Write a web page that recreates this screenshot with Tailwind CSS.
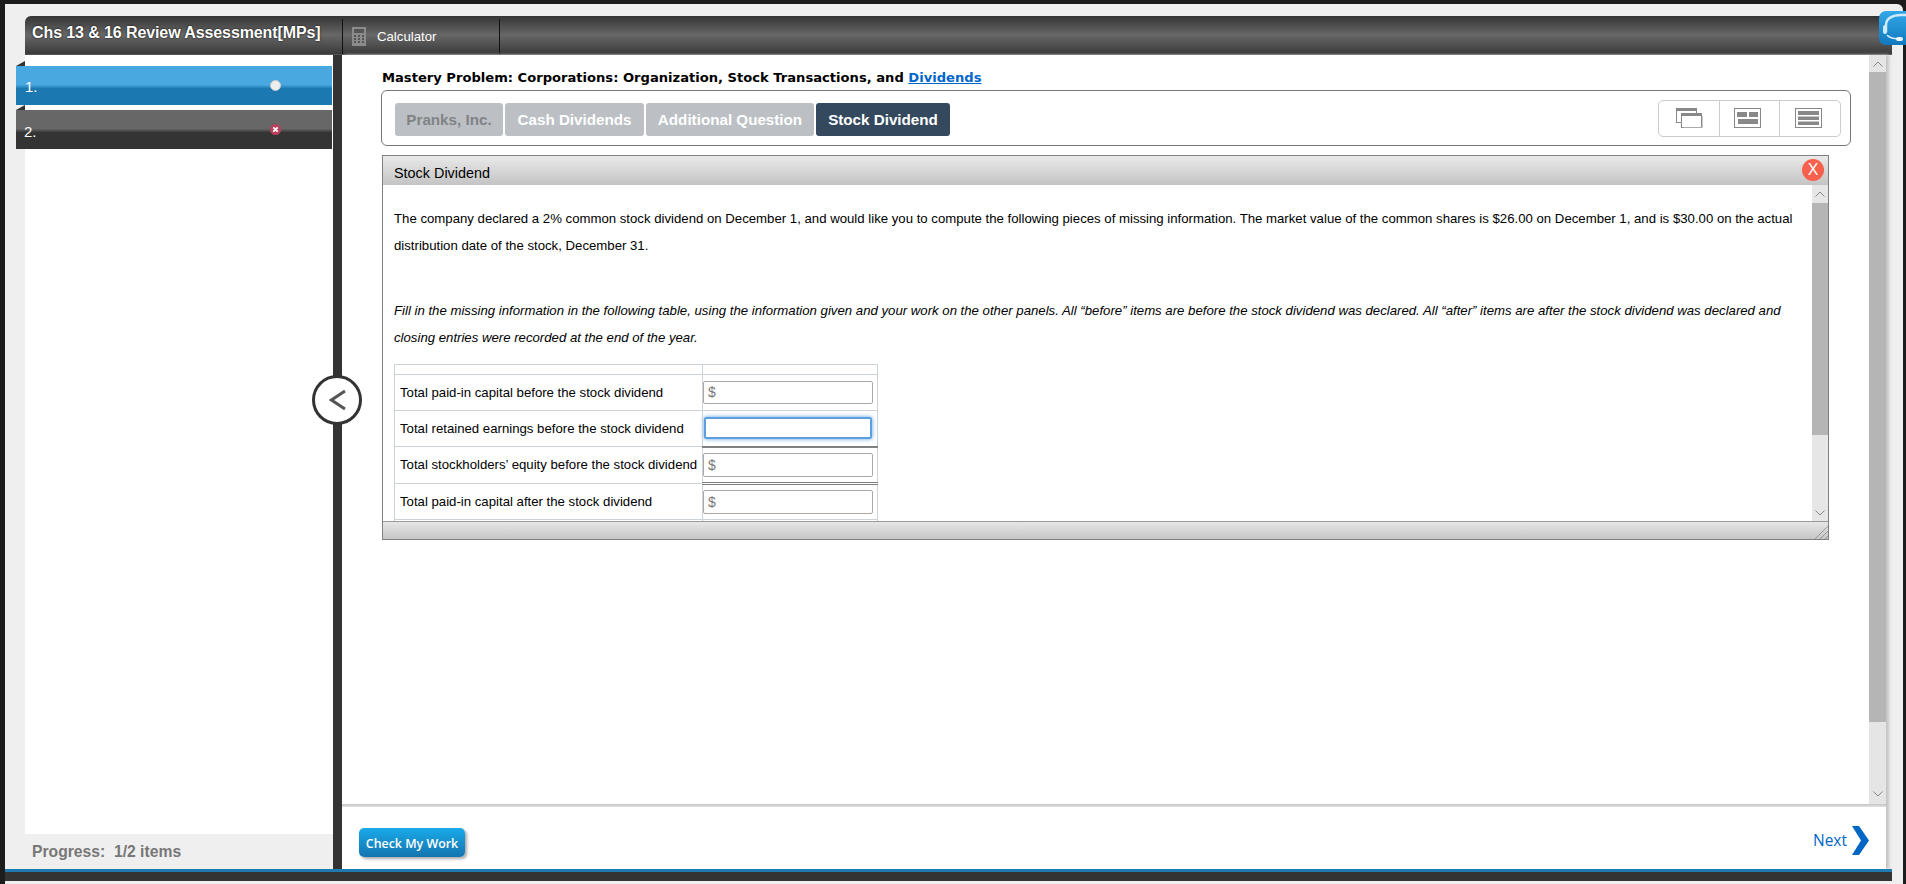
<!DOCTYPE html>
<html lang="en"><head><meta charset="utf-8"><title>Stock Dividend</title>
<script src="https://cdn.jsdelivr.net/npm/@tailwindcss/browser@4"></script></head>
<body class="bg-[#1c1c1c] font-['Liberation_Sans',Arial,sans-serif] overflow-hidden">
<div class="relative w-[1906px] h-[884px] pt-[4px] pl-[5px] pr-[3px] flex flex-col">
 <div class="flex-1 bg-[#efefef] rounded-tr-[6px] flex flex-col pt-[12px] min-h-0">
  <!-- top bar -->
  <div class="ml-[20px] mr-[11px] h-[39px] shrink-0 flex rounded-tl-[6px] bg-[linear-gradient(#343434,#676767_50%,#3a3a3a)] border-b border-[#555]">
   <div class="w-[317px] pl-[7px] pt-[7px] text-[16px] leading-[20px] font-bold text-white tracking-[-0.1px] [text-shadow:0_0_2px_#000]">Chs 13 &amp; 16 Review Assessment[MPs]</div>
   <div class="w-[158px] mt-[3px] border-x border-[#111] flex items-center pl-[9px] gap-[11px] text-[13.200px] text-white">
    <svg width="14" height="19" viewBox="0 0 14 19"><rect width="14" height="19" fill="#8b8b8b"/><rect x="2" y="2" width="10" height="4" fill="#555"/><g fill="#555"><rect x="2" y="8" width="2" height="2"/><rect x="6" y="8" width="2" height="2"/><rect x="10" y="8" width="2" height="2"/><rect x="2" y="11" width="2" height="2"/><rect x="6" y="11" width="2" height="2"/><rect x="10" y="11" width="2" height="2"/><rect x="2" y="14" width="2" height="2"/><rect x="6" y="14" width="2" height="2"/><rect x="10" y="14" width="2" height="2"/></g></svg>
    <span class="pt-[1px]">Calculator</span>
   </div>
  </div>
  <div class="flex-1 flex min-h-0">
   <!-- sidebar -->
   <div class="w-[328px] shrink-0 flex flex-col pl-[20px]">
    <div class="flex-1 bg-white pt-[11px] flex flex-col gap-[5px]">
     <div class="relative -ml-[9px] mr-[1px] h-[39px] shrink-0 bg-[linear-gradient(#4aa8e0_0,#4aa8e0_48%,#1b78b0_58%,#1b78b0)] text-white text-[15px] leading-[42px] pl-[9px]">
      <span class="absolute left-0 -top-[5px] border-b-[5px] border-l-[9px] border-b-[#333] border-l-transparent"></span>1.
      <span class="absolute left-[254px] top-[14px] w-[11px] h-[11px] rounded-full bg-[#eee] border border-[#ccc]"></span>
     </div>
     <div class="relative -ml-[9px] mr-[1px] h-[39px] shrink-0 bg-[linear-gradient(#676767_0,#676767_48%,#343434_58%,#343434)] text-white text-[15px] leading-[44px] pl-[8px]">
      <span class="absolute left-0 -top-[5px] border-b-[5px] border-l-[9px] border-b-[#333] border-l-transparent"></span>2.
      <svg class="absolute left-[254px] top-[14px]" width="11" height="11" viewBox="0 0 11 11"><circle cx="5.5" cy="5.5" r="5.5" fill="#b8405e"/><path d="M3.3 3.3l4.4 4.4M7.7 3.3l-4.4 4.4" stroke="#fff" stroke-width="1.8"/></svg>
     </div>
    </div>
    <div class="h-[35px] shrink-0 pl-[7px] text-[15.700px] leading-[35px] font-bold text-[#777]">Progress:&nbsp; 1/2 items</div>
   </div>
   <div class="w-[9px] shrink-0 bg-[#333]"></div>
   <!-- content -->
   <div class="flex-1 min-w-0 flex flex-col bg-white mr-[17px] shadow-[3px_0_3px_#c4c4c4]">
    <div class="flex-1 min-h-0 flex">
     <div class="flex-1 min-w-0 pl-[40px] pt-[14px]">
      <h1 class="text-[13.100px] leading-[17px] font-bold text-black font-['DejaVu_Sans',sans-serif] whitespace-nowrap">Mastery Problem: Corporations: Organization, Stock Transactions, and <a class="text-[#0066cc] underline">Dividends</a></h1>
      <div class="mt-[4px] w-[1470px] -ml-[1px] h-[56px] border border-[#777] rounded-[6px] flex items-center justify-between pl-[13px] pr-[9px]">
       <div class="mt-[3px] flex text-[15.200px] font-bold gap-[2px] text-white">
        <div class="w-[108px] h-[33px] leading-[33px] text-center rounded-[3px] bg-[#bcc0c4] text-[#808386]">Pranks, Inc.</div>
        <div class="w-[139px] h-[33px] leading-[33px] text-center rounded-[3px] bg-[#bcc0c4]">Cash Dividends</div>
        <div class="w-[168px] h-[33px] leading-[33px] text-center rounded-[3px] bg-[#bcc0c4]">Additional Question</div>
        <div class="w-[134px] h-[33px] leading-[33px] text-center rounded-[3px] bg-[#34495e]">Stock Dividend</div>
       </div>
       <div class="mt-[1px] flex h-[37px] border border-[#ccc] rounded-[5px]">
        <div class="w-[61px] flex items-center justify-center border-r border-[#ccc] pb-[2px]">
         <svg width="27" height="20" viewBox="0 0 27 20"><rect x=".5" y=".5" width="20" height="14" fill="#fff" stroke="#888"/><rect x="0" y="0" width="21" height="3" fill="#888"/><rect x="5.5" y="5.5" width="20" height="14" fill="#fff" stroke="#888"/><rect x="5" y="5" width="21" height="3" fill="#888"/><path d="M26.500 8v12H7" fill="none" stroke="#ccc"/></svg>
        </div>
        <div class="w-[60px] flex items-center justify-center border-r border-[#ccc] pb-[2px] pr-[4px]">
         <svg width="27" height="20" viewBox="0 0 27 20"><rect x=".5" y=".5" width="26" height="19" fill="#fff" stroke="#888"/><rect x="3" y="4" width="10" height="5" fill="#888"/><rect x="15" y="4" width="9" height="5" fill="#888"/><rect x="4" y="11" width="20" height="5" fill="#888"/></svg>
        </div>
        <div class="w-[60px] flex items-center justify-center pb-[2px] pr-[4px]">
         <svg width="27" height="20" viewBox="0 0 27 20"><rect x=".5" y=".5" width="26" height="19" fill="#fff" stroke="#888"/><rect x="3" y="3" width="21" height="4" fill="#888"/><rect x="3" y="8.5" width="21" height="3.5" fill="#888"/><rect x="3" y="13.500" width="21" height="3.5" fill="#888"/></svg>
        </div>
       </div>
      </div>
      <!-- panel -->
      <div class="mt-[9px] w-[1447px] h-[385px] border border-[#808080] flex flex-col">
       <div class="relative h-[29px] shrink-0 bg-[linear-gradient(#e9e9e9,#c4c4c4)] pl-[11px] text-[14.400px] leading-[34px] text-black">Stock Dividend
        <span class="absolute right-[4px] top-[3px] w-[22px] h-[22px] rounded-full bg-[#f6604c] text-white text-[16px] leading-[22px] text-center">X</span>
       </div>
       <div class="flex-1 min-h-0 flex">
        <div class="flex-1 min-w-0 overflow-hidden pl-[11px] pt-[20px] text-[13.200px] leading-[27px] text-black">
         <p class="whitespace-nowrap">The company declared a 2% common stock dividend on December 1, and would like you to compute the following pieces of missing information. The market value of the common shares is $26.00 on December 1, and is $30.00 on the actual<br>distribution date of the stock, December 31.</p>
         <p class="mt-[38px] italic whitespace-nowrap">Fill in the missing information in the following table, using the information given and your work on the other panels. All “before” items are before the stock dividend was declared. All “after” items are after the stock dividend was declared and<br>closing entries were recorded at the end of the year.</p>
         <table class="mt-[13px] w-[484px] table-fixed border-collapse border border-[#ccd3d8] leading-[16px]">
          <colgroup><col class="w-[308px]"><col></colgroup>
          <tbody>
           <tr class="h-[10px]"><td class="border border-[#ccd3d8]"></td><td class="border border-[#ccd3d8]"></td></tr>
           <tr class="h-[36px]"><td class="border border-[#ccd3d8] pl-[5px] whitespace-nowrap">Total paid-in capital before the stock dividend</td><td class="border border-[#ccd3d8] pl-[0px] pr-[4px]"><div class="h-[23px] border border-[#a9a9a9] rounded-[2px] pl-[4px] text-[14px] leading-[21px] text-[#777]">$</div></td></tr>
           <tr class="h-[36px]"><td class="border border-[#ccd3d8] pl-[5px] whitespace-nowrap">Total retained earnings before the stock dividend</td><td class="border border-[#ccd3d8] border-b-[2px] border-b-[#808080] pl-[1px] pr-[5px]"><div class="h-[22px] border-2 border-[#5b9fe0] rounded-[2px] shadow-[0_0_4px_#5b9fe0]"></div></td></tr>
           <tr class="h-[37px]"><td class="border border-[#ccd3d8] pl-[5px] whitespace-nowrap">Total stockholders’ equity before the stock dividend</td><td class="border-x border-[#ccd3d8] border-b-[3px] border-b-[#808080] border-double pl-[0px] pr-[4px]"><div class="h-[24px] border border-[#a9a9a9] rounded-[2px] pl-[4px] text-[14px] leading-[22px] text-[#777]">$</div></td></tr>
           <tr class="h-[36px]"><td class="border border-[#ccd3d8] pl-[5px] whitespace-nowrap">Total paid-in capital after the stock dividend</td><td class="border border-[#ccd3d8] pl-[0px] pr-[4px]"><div class="h-[24px] border border-[#a9a9a9] rounded-[2px] pl-[4px] text-[14px] leading-[22px] text-[#777]">$</div></td></tr>
           <tr class="h-[36px]"><td class="border border-[#ccd3d8]"></td><td class="border border-[#ccd3d8]"></td></tr>
          </tbody>
         </table>
        </div>
        <div class="w-[16px] shrink-0 bg-[#e6e6e6] flex flex-col">
         <div class="h-[18px] flex items-center justify-center"><svg width="10" height="6" viewBox="0 0 10 6"><path d="M.5 5.500L5 1l4.500 4.500" fill="none" stroke="#888"/></svg></div>
         <div class="h-[232px] bg-[#b5b5b5]"></div>
         <div class="flex-1 flex items-end justify-center pb-[5px]"><svg width="10" height="6" viewBox="0 0 10 6"><path d="M.5.5L5 5 9.500.5" fill="none" stroke="#888"/></svg></div>
        </div>
       </div>
       <div class="relative h-[18px] shrink-0 border-t border-[#999] bg-[linear-gradient(#e6e6e6,#c6c6c6)]">
        <svg class="absolute right-0 bottom-0" width="14" height="14" viewBox="0 0 14 14"><path d="M1 14L14 1M6 14l8-8M11 14l3-3" stroke="#999"/></svg>
       </div>
      </div>
     </div>
     <!-- main scrollbar -->
     <div class="w-[17px] shrink-0 bg-[#e5e5e5] flex flex-col">
      <div class="h-[17px] flex items-center justify-center"><svg width="10" height="6" viewBox="0 0 10 6"><path d="M.5 5.500L5 1l4.500 4.500" fill="none" stroke="#888"/></svg></div>
      <div class="h-[650px] bg-[#b5b5b5]"></div>
      <div class="flex-1 flex items-end justify-center pb-[7px]"><svg width="10" height="6" viewBox="0 0 10 6"><path d="M.5.5L5 5 9.500.5" fill="none" stroke="#888"/></svg></div>
     </div>
    </div>
    <!-- footer -->
    <div class="h-[65px] shrink-0 pt-[3px] bg-[linear-gradient(#c4c4c4,#e2e2e2_3px,#fff_3px)] flex items-start justify-between pl-[17px] pr-[17px]">
     <button class="mt-[21px] w-[106px] h-[29px] rounded-[5px] bg-[linear-gradient(#1aaaea,#1474ae)] text-white text-[12.400px] leading-[31px] font-['Open_Sans',sans-serif] font-semibold shadow-[2px_2px_3px_#aaa]">Check My Work</button>
     <div class="mt-[19px] flex items-center gap-[5px] text-[#0068c4] text-[15.500px] font-['Open_Sans',sans-serif]">Next
      <svg width="17" height="29" viewBox="0 0 17 29"><path d="M0 0h7l10 14.500L7 29H0l9-14.500z" fill="#0068c4"/></svg>
     </div>
    </div>
   </div>
  </div>
  <div class="mr-[11px] h-[3px] shrink-0 bg-[#1f7ab2]"></div>
  <div class="mr-[11px] h-[9px] shrink-0 bg-[#333]"></div>
  <div class="h-[3px] shrink-0"></div>
 </div>
 <!-- round toggle -->
 <div class="absolute left-[312px] top-[375px] w-[50px] h-[50px] rounded-full bg-white border-[3px] border-[#333] flex items-center justify-center">
  <svg width="17" height="22" viewBox="0 0 17 22"><path d="M16 2L2.500 11 16 20" fill="none" stroke="#555" stroke-width="3"/></svg>
 </div>
 <!-- headset -->
 <div class="absolute left-[1879px] top-[11px] w-[27px] h-[34px] rounded-l-[7px] bg-[linear-gradient(#31a8ea,#1278bd)] overflow-hidden">
  <svg width="27" height="34" viewBox="0 0 27 34"><path d="M7 21V14C7 7 14 4 22 4h5" fill="none" stroke="#cfeafa" stroke-width="2.500"/><rect x="4" y="14" width="4" height="9" rx="2" fill="#cfeafa"/><path d="M8 24c3 4 10 4 14 4" fill="none" stroke="#cfeafa" stroke-width="1.500"/><rect x="17" y="26" width="7" height="4" rx="2" fill="#e8f6fd"/></svg>
 </div>
</div>
</body></html>
